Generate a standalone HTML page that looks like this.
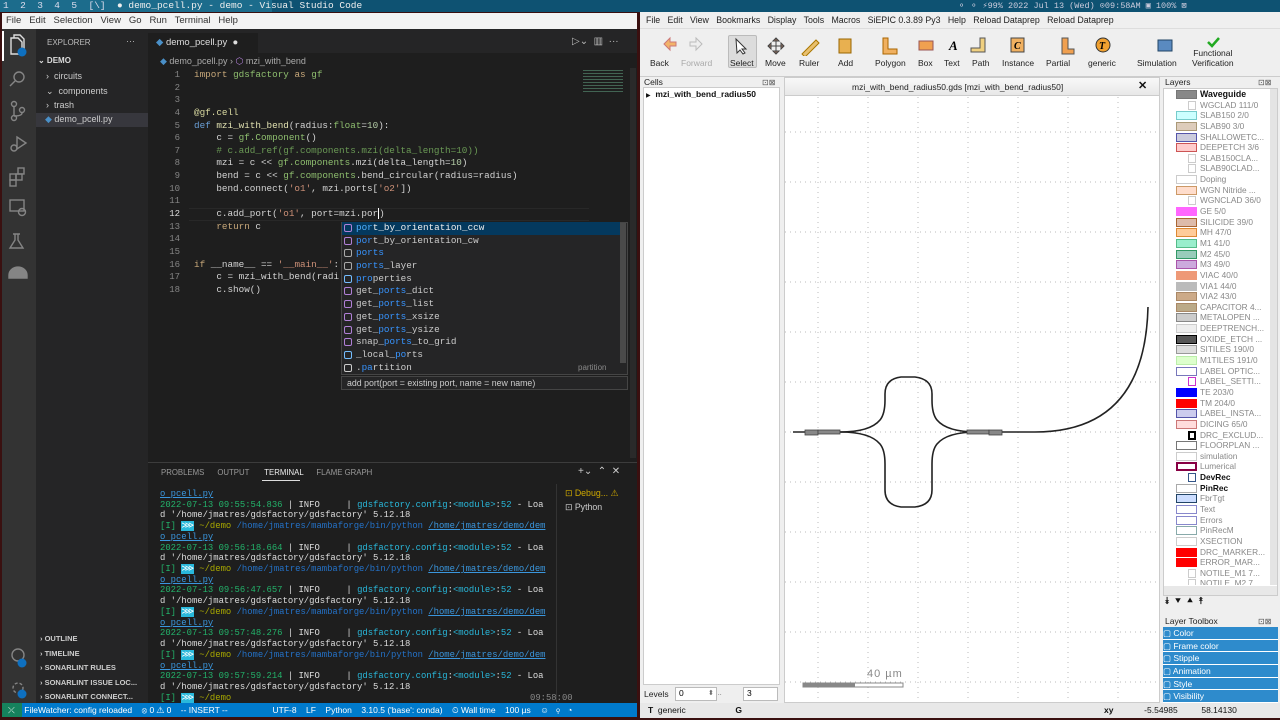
<!DOCTYPE html><html><head><meta charset="utf-8"><style>
*{margin:0;padding:0;box-sizing:border-box}
body{width:1280px;height:720px;overflow:hidden;background:#3a1010;font-family:"Liberation Sans",sans-serif;position:relative}
.a{position:absolute;white-space:pre}
.m{font-family:"Liberation Mono",monospace}
.code,.t,.ac,.lay,.tbx{white-space:normal}
.code div,.t div,.ac div,.lay div{white-space:pre}
.code div{height:12.65px;line-height:12.65px}
.t div{height:10.72px;line-height:10.72px}
.ac div{height:12.7px;line-height:12.7px;padding-left:15px;position:relative}
.ac div i{position:absolute;left:3px;top:2px;width:8px;height:8px;border:1px solid #b180d7;border-radius:2px}
.lay div{height:10.65px;line-height:10.65px;position:relative;padding-left:36px;font-size:8.3px;color:#888}
.lay div b{position:absolute;left:12px;top:1px;width:21px;height:9px;border:1px solid #777}
.tb div{position:absolute;top:58px;font-size:8.5px;color:#222;text-align:center}
.tbx div{height:12.7px;line-height:12.7px;background:#2e8bcc;border-bottom:1px solid #fff}
</style></head><body>
<div class="a" style="left:0;top:0;width:1280px;height:12px;background:#0e5272"></div>
<div class="a m" style="left:0;top:0;width:272px;height:12px;background:#1c6c8c"></div>
<div class="a m" style="left:3px;top:0;font-size:9.5px;color:#dde;line-height:12px">1  2  3  4  5  [\]  <span style="color:#eee">● demo_pcell.py - demo - Visual Studio Code</span></div>
<div class="a m" style="left:958px;top:0;font-size:8.5px;color:#ccd;line-height:12px">⚬ ⚬ ⚡99% 2022 Jul 13 (Wed) ⊙09:58AM ▣ 100% ⊠</div>

<div class="a" style="left:2px;top:13px;width:635px;height:16px;background:#f3f3f3"></div>
<div class="a" style="left:6px;top:13px;font-size:9.5px;color:#333;line-height:16px">File   Edit   Selection   View   Go   Run   Terminal   Help</div>
<div class="a" style="left:2px;top:29px;width:34px;height:674px;background:#333333"></div>
<div class="a" style="left:2px;top:31px;width:2px;height:30px;background:#fff"></div>
<svg class="a" style="left:2px;top:30px" width="34" height="670" fill="none" stroke="#858585" stroke-width="1.4">
<path d="M9 8h7l4 4v12H9z M12 8V5h6l4 4v12" stroke="#ddd"/><circle cx="20" cy="22" r="4.5" fill="#0e70c0" stroke="none"/>
<circle cx="17" cy="47" r="5"/><path d="M13 51l-5 5"/>
<circle cx="12" cy="74" r="2.5"/><circle cx="12" cy="88" r="2.5"/><circle cx="20" cy="80" r="2.5"/><path d="M12 77v8M20 83q0 3-8 3"/>
<path d="M15 107l9 6-9 6z"/><circle cx="12" cy="118" r="3"/>
<rect x="8" y="144" width="6" height="6"/><rect x="14" y="144" width="6" height="6"/><rect x="8" y="150" width="6" height="6"/><rect x="16" y="138" width="6" height="6"/>
<rect x="8" y="170" width="14" height="11"/><circle cx="20" cy="182" r="3.5"/>
<path d="M11 204h7M13 204v6l-5 8h13l-5-8v-6"/>
<path d="M7 245a8 7 0 0 1 18 0v3H7z" fill="#858585"/>
<circle cx="16" cy="625" r="6"/><circle cx="16" cy="658" r="5" stroke-dasharray="3 2"/>
<circle cx="20" cy="633" r="4.5" fill="#0e70c0" stroke="none"/><circle cx="20" cy="664" r="4.5" fill="#0e70c0" stroke="none"/>
</svg>
<div class="a" style="left:36px;top:29px;width:112px;height:674px;background:#252526"></div>
<div class="a" style="left:47px;top:38px;font-size:8px;color:#bbb">EXPLORER</div>
<div class="a" style="left:126px;top:36px;font-size:9px;color:#bbb">···</div>
<div class="a" style="left:38px;top:56px;font-size:8px;color:#ddd;font-weight:bold">⌄ DEMO</div>
<div class="a" style="left:46px;top:69px;font-size:9px;color:#ccc;line-height:14.7px">›  circuits
⌄  components
›  trash</div>
<div class="a" style="left:36px;top:113px;width:112px;height:14px;background:#37373d"></div>
<div class="a" style="left:45px;top:114px;font-size:9px;color:#ccc"><span style="color:#4a90c8">◆</span> demo_pcell.py</div>
<div class="a" style="left:36px;top:630px;width:112px;height:73px;background:#252526"></div>
<div class="a" style="left:40px;top:632px;font-size:7.5px;color:#ccc;font-weight:bold;line-height:14.6px">› OUTLINE
› TIMELINE
› SONARLINT RULES
› SONARLINT ISSUE LOC...
› SONARLINT CONNECT...</div>

<div class="a" style="left:148px;top:29px;width:489px;height:433px;background:#1e1e1e"></div>
<div class="a" style="left:148px;top:29px;width:489px;height:24px;background:#252526"></div>
<div class="a" style="left:148px;top:33px;width:110px;height:20px;background:#1e1e1e"></div>
<div class="a" style="left:156px;top:37px;font-size:9.5px;color:#ddd"><span style="color:#4a90c8">◆</span> demo_pcell.py  ●</div>
<div class="a" style="left:572px;top:36px;font-size:10px;color:#bbb">▷⌄  ▥  ···</div>
<div class="a" style="left:160px;top:56px;font-size:9px;color:#aaa"><span style="color:#4a90c8">◆</span> demo_pcell.py › <span style="color:#b180d7">⬡</span> mzi_with_bend</div>
<div class="a m code" style="left:150px;top:69px;width:30px;text-align:right;font-size:9px;color:#858585"><div>1</div><div>2</div><div>3</div><div>4</div><div>5</div><div>6</div><div>7</div><div>8</div><div>9</div><div>10</div><div>11</div><div style="color:#ddd">12</div><div>13</div><div>14</div><div>15</div><div>16</div><div>17</div><div>18</div></div>
<div class="a" style="left:189px;top:208px;width:400px;height:13px;border-top:1px solid #282828;border-bottom:1px solid #282828"></div>
<div class="a m code" style="left:194px;top:69px;font-size:9.3px;color:#d4d4d4"><div><span style="color:#c8a87a">import</span> <span style="color:#8fbf6f">gdsfactory</span> <span style="color:#c8a87a">as</span> <span style="color:#8fbf6f">gf</span></div><div></div><div></div><div><span style="color:#d8d8a0">@gf.cell</span></div><div><span style="color:#6a9fd6">def</span> <span style="color:#e0e0b0">mzi_with_bend</span>(radius:<span style="color:#8fbf6f">float</span>=<span style="color:#b5cea8">10</span>):</div><div>    c = <span style="color:#8fbf6f">gf.Component</span>()</div><div style="color:#6a9955">    # c.add_ref(gf.components.mzi(delta_length=10))</div><div>    mzi = c &lt;&lt; <span style="color:#8fbf6f">gf.components</span>.mzi(delta_length=<span style="color:#b5cea8">10</span>)</div><div>    bend = c &lt;&lt; <span style="color:#8fbf6f">gf.components</span>.bend_circular(radius=radius)</div><div>    bend.connect(<span style="color:#ce9178">'o1'</span>, mzi.ports[<span style="color:#ce9178">'o2'</span>])</div><div></div><div>    c.add_port(<span style="color:#ce9178">'o1'</span>, port=mzi.por<span style="border-left:1px solid #fff">)</span></div><div>    <span style="color:#c8a87a">return</span> c</div><div></div><div></div><div><span style="color:#c8a87a">if</span> __name__ == <span style="color:#ce9178">'__main__'</span>:</div><div>    c = mzi_with_bend(radi</div><div>    c.show()</div></div>
<div class="a" style="left:583px;top:70px;width:40px;height:24px;opacity:.5;background:repeating-linear-gradient(#6a8 0 1px,transparent 1px 3px)"></div>
<div class="a" style="left:630px;top:68px;width:6px;height:390px;background:#2a2a2a"></div>
<div class="a" style="left:341px;top:222px;width:287px;height:153px;background:#252526;border:1px solid #454545"></div>
<div class="a" style="left:342px;top:222px;width:278px;height:12.7px;background:#04395e"></div>
<div class="a" style="left:620px;top:223px;width:6px;height:140px;background:#4a4a4a"></div>
<div class="a m ac" style="left:341px;top:222px;font-size:9.3px;color:#ccc"><div><i></i><span style="color:#4fb0ff">por</span><span style="color:#eee">t_by_orientation_ccw</span></div><div><i></i><span style="color:#3794ff">por</span>t_by_orientation_cw</div><div><i style="border-color:#aaa"></i><span style="color:#3794ff">ports</span></div><div><i style="border-color:#aaa"></i><span style="color:#3794ff">ports</span>_layer</div><div><i style="border-color:#75beff"></i><span style="color:#3794ff">pro</span>perties</div><div><i></i>get_<span style="color:#3794ff">ports</span>_dict</div><div><i></i>get_<span style="color:#3794ff">ports</span>_list</div><div><i></i>get_<span style="color:#3794ff">ports</span>_xsize</div><div><i></i>get_<span style="color:#3794ff">ports</span>_ysize</div><div><i></i>snap_<span style="color:#3794ff">ports</span>_to_grid</div><div><i style="border-color:#75beff"></i>_local_<span style="color:#3794ff">po</span>rts</div><div><i style="border-color:#ccc"></i>.<span style="color:#3794ff">pa</span>rtition<span style="position:absolute;left:237px;color:#888;font-size:8px;font-family:'Liberation Sans'">partition</span></div></div>
<div class="a" style="left:341px;top:376px;width:287px;height:14px;background:#252526;border:1px solid #454545"></div>
<div class="a" style="left:347px;top:378px;font-size:8.8px;color:#ccc">add port(port = existing port, name = new name)</div>

<div class="a" style="left:148px;top:462px;width:489px;height:241px;background:#1e1e1e;border-top:1px solid #3c3c3c"></div>
<div class="a" style="left:161px;top:468px;font-size:7.8px;color:#999">PROBLEMS      OUTPUT       <span style="color:#eee">TERMINAL</span>      FLAME GRAPH</div>
<div class="a" style="left:262px;top:480px;width:38px;height:1px;background:#ddd"></div>
<div class="a" style="left:578px;top:466px;font-size:10px;color:#ccc">+⌄  ⌃  ✕</div>
<div class="a" style="left:556px;top:484px;width:1px;height:218px;background:#333"></div>
<div class="a" style="left:565px;top:486px;font-size:8.8px;color:#ccc;line-height:14px"><span style="color:#cca700">⊡ Debug... ⚠</span>
⊡ Python</div>
<div class="a m t" style="left:160px;top:489px;font-size:8.9px;color:#ddd"><div style="color:#3a96dd;text-decoration:underline">o pcell.py</div><div><span style="color:#23b26a">2022-07-13 09:55:54.836</span> | INFO     | <span style="color:#29b8db">gdsfactory.config</span>:<span style="color:#29b8db">&lt;module&gt;</span>:<span style="color:#29b8db">52</span> - Loa</div><div>d '/home/jmatres/gdsfactory/gdsfactory' 5.12.18</div><div><span style="color:#23b26a">[I]</span> <span style="background:#29b8db;color:#fff">⋙</span> <span style="color:#a8a800">~/demo</span> <span style="color:#2472c8">/home/jmatres/mambaforge/bin/python</span> <span style="color:#3a96dd;text-decoration:underline">/home/jmatres/demo/dem</span></div><div style="color:#3a96dd;text-decoration:underline">o pcell.py</div><div><span style="color:#23b26a">2022-07-13 09:56:18.664</span> | INFO     | <span style="color:#29b8db">gdsfactory.config</span>:<span style="color:#29b8db">&lt;module&gt;</span>:<span style="color:#29b8db">52</span> - Loa</div><div>d '/home/jmatres/gdsfactory/gdsfactory' 5.12.18</div><div><span style="color:#23b26a">[I]</span> <span style="background:#29b8db;color:#fff">⋙</span> <span style="color:#a8a800">~/demo</span> <span style="color:#2472c8">/home/jmatres/mambaforge/bin/python</span> <span style="color:#3a96dd;text-decoration:underline">/home/jmatres/demo/dem</span></div><div style="color:#3a96dd;text-decoration:underline">o pcell.py</div><div><span style="color:#23b26a">2022-07-13 09:56:47.657</span> | INFO     | <span style="color:#29b8db">gdsfactory.config</span>:<span style="color:#29b8db">&lt;module&gt;</span>:<span style="color:#29b8db">52</span> - Loa</div><div>d '/home/jmatres/gdsfactory/gdsfactory' 5.12.18</div><div><span style="color:#23b26a">[I]</span> <span style="background:#29b8db;color:#fff">⋙</span> <span style="color:#a8a800">~/demo</span> <span style="color:#2472c8">/home/jmatres/mambaforge/bin/python</span> <span style="color:#3a96dd;text-decoration:underline">/home/jmatres/demo/dem</span></div><div style="color:#3a96dd;text-decoration:underline">o pcell.py</div><div><span style="color:#23b26a">2022-07-13 09:57:48.276</span> | INFO     | <span style="color:#29b8db">gdsfactory.config</span>:<span style="color:#29b8db">&lt;module&gt;</span>:<span style="color:#29b8db">52</span> - Loa</div><div>d '/home/jmatres/gdsfactory/gdsfactory' 5.12.18</div><div><span style="color:#23b26a">[I]</span> <span style="background:#29b8db;color:#fff">⋙</span> <span style="color:#a8a800">~/demo</span> <span style="color:#2472c8">/home/jmatres/mambaforge/bin/python</span> <span style="color:#3a96dd;text-decoration:underline">/home/jmatres/demo/dem</span></div><div style="color:#3a96dd;text-decoration:underline">o pcell.py</div><div><span style="color:#23b26a">2022-07-13 09:57:59.214</span> | INFO     | <span style="color:#29b8db">gdsfactory.config</span>:<span style="color:#29b8db">&lt;module&gt;</span>:<span style="color:#29b8db">52</span> - Loa</div><div>d '/home/jmatres/gdsfactory/gdsfactory' 5.12.18</div><div><span style="color:#23b26a">[I]</span> <span style="background:#29b8db;color:#fff">⋙</span> <span style="color:#a8a800">~/demo</span><span style="position:absolute;left:370px;color:#888">09:58:00</span></div></div>

<div class="a" style="left:2px;top:703px;width:635px;height:14px;background:#007acc"></div>
<div class="a" style="left:2px;top:703px;width:20px;height:14px;background:#16825d"></div>
<div class="a" style="left:8px;top:704px;font-size:8.5px;color:#fff;line-height:12px">⤫    FileWatcher: config reloaded    ⊗ 0 ⚠ 0    -- INSERT --                   UTF-8    LF    Python    3.10.5 ('base': conda)    ⏲ Wall time    100 µs    ☺   ⚲   ◔</div>

<div class="a" style="left:640px;top:12px;width:640px;height:706px;background:#efefef"></div>
<div class="a" style="left:646px;top:15px;font-size:8.8px;color:#222">File   Edit   View   Bookmarks   Display   Tools   Macros   SiEPIC 0.3.89 Py3   Help   Reload Dataprep   Reload Dataprep</div>
<div class="a" style="left:640px;top:28px;width:640px;height:1px;background:#ddd"></div>
<div class="a" style="left:728px;top:35px;width:29px;height:33px;background:#dcdcdc;border:1px solid #bbb;border-radius:2px"></div>
<svg class="a" style="left:640px;top:34px" width="640" height="22">
<path d="M24 10l6-6v4h6v4h-6v4z" fill="#f2b36a" stroke="#c77"/>
<path d="M62 10l-6-6v4h-6v4h6v4z" fill="#eee" stroke="#bbb"/>
<path d="M96 5l10 10-4 0 3 4-2 1-3-4-3 3z" fill="#fff" stroke="#333"/>
<path d="M136 4v16M128 12h16M136 4l-3 3h6zM136 20l-3-3h6zM128 12l3-3v6zM144 12l-3-3v6z" stroke="#444" fill="#d97"/>
<path d="M162 20l14-14 3 3-14 14z" fill="#e8c070" stroke="#a70"/>
<rect x="199" y="5" width="12" height="14" fill="#e8b050" stroke="#960"/>
<path d="M243 4v16h14v-5h-9V4z" fill="#f0b060" stroke="#a60"/>
<rect x="279" y="7" width="14" height="9" fill="#f0a050" stroke="#955"/>
<text x="309" y="16" font-size="13" font-style="italic" font-family="Liberation Serif" font-weight="bold">A</text>
<path d="M331 18h14V4h-5v10h-9z" fill="#f0d080" stroke="#555"/>
<rect x="371" y="4" width="13" height="14" fill="#f0b060" stroke="#444"/><text x="374" y="15" font-size="10" font-family="Liberation Serif" font-weight="bold" font-style="italic">C</text>
<path d="M422 4v16h12v-5h-6V4z" fill="#f0a050" stroke="#555"/>
<circle cx="463" cy="11" r="7" fill="#f0a030" stroke="#333"/><text x="459" y="15" font-size="10" font-family="Liberation Serif" font-weight="bold" font-style="italic">T</text>
<rect x="518" y="6" width="14" height="11" fill="#5a8ac0" stroke="#246"/>
<path d="M568 8l4 4 7-8" stroke="#2a2" stroke-width="2.5" fill="none"/>
</svg>
<div class="tb"><div style="left:650px">Back</div><div style="left:681px;color:#aaa">Forward</div><div style="left:730px">Select</div><div style="left:765px">Move</div><div style="left:799px">Ruler</div><div style="left:838px">Add</div><div style="left:875px">Polygon</div><div style="left:918px">Box</div><div style="left:944px">Text</div><div style="left:972px">Path</div><div style="left:1002px">Instance</div><div style="left:1046px">Partial</div><div style="left:1088px">generic</div><div style="left:1137px">Simulation</div><div style="left:1192px;top:48px;line-height:10px">Functional<br>Verification</div></div>
<div class="a" style="left:640px;top:76px;width:640px;height:1px;background:#ccc"></div>
<div class="a" style="left:644px;top:77px;font-size:8.5px;color:#222">Cells</div>
<div class="a" style="left:762px;top:78px;font-size:8px;color:#555">⊡⊠</div>
<div class="a" style="left:643px;top:87px;width:137px;height:598px;background:#fff;border:1px solid #ccc"></div>
<div class="a" style="left:646px;top:89px;font-size:8.5px;color:#111"><span style="font-size:6px">▶</span>  <b>mzi_with_bend_radius50</b></div>
<div class="a" style="left:644px;top:689px;font-size:8.5px;color:#222">Levels</div>
<div class="a" style="left:675px;top:687px;width:42px;height:14px;background:#fff;border:1px solid #bbb;font-size:8.5px;padding-left:3px">0</div>
<div class="a" style="left:708px;top:689px;font-size:7px;color:#666">⬍  ..</div>
<div class="a" style="left:743px;top:687px;width:35px;height:14px;background:#fff;border:1px solid #bbb;font-size:8.5px;padding-left:3px">3</div>

<div class="a" style="left:784px;top:77px;width:376px;height:626px;background:#fff;border:1px solid #ccc"></div>
<div class="a" style="left:785px;top:78px;width:374px;height:18px;background:linear-gradient(#f8f8f8,#e8e8e8);border-bottom:1px solid #ccc"></div>
<div class="a" style="left:852px;top:82px;font-size:8.5px;color:#222">mzi_with_bend_radius50.gds [mzi_with_bend_radius50]</div>
<div class="a" style="left:1138px;top:79px;font-size:11px;color:#111;font-weight:bold">✕</div>
<svg class="a" style="left:785px;top:97px" width="374" height="605">
<g stroke="#bbb" stroke-width="1" stroke-dasharray="1 4">
<path d="M33 0v605M83 0v605M133 0v605M183 0v605M233 0v605M283 0v605M333 0v605"/>
<path d="M0 35h374M0 85h374M0 135h374M0 185h374M0 235h374M0 285h374M0 335h374M0 385h374M0 435h374M0 485h374M0 535h374M0 585h374"/>
</g>
<g fill="none" stroke="#222" stroke-width="1.6">
<path d="M8 335h40M55 335q30 0 40-12q5-6 5-20v-6q0-15 16-17h14q17 2 17 17v6q0 14 5 20q10 12 40 12"/>
<path d="M55 335q30 0 40 12q5 6 5 20v26q0 15 16 17h14q17-2 17-17v-26q0-14 5-20q10-12 40-12"/>
<path d="M190 335h60q110 0 113-125"/>
</g>
<g fill="#888" stroke="#444" stroke-width=".8">
<rect x="20" y="333" width="13" height="5"/><rect x="33" y="333" width="22" height="4"/><rect x="182" y="333" width="22" height="4"/><rect x="204" y="333" width="13" height="5"/></g>
<text x="82" y="580" font-size="11" fill="#888" font-family="Liberation Sans" letter-spacing="1">40 µm</text>
<rect x="18" y="586" width="100" height="4" fill="#fff" stroke="#888"/><rect x="18" y="586" width="52" height="4" fill="#888"/>
</svg>

<div class="a" style="left:1165px;top:77px;font-size:8.5px;color:#222">Layers</div>
<div class="a" style="left:1258px;top:78px;font-size:8px;color:#555">⊡⊠</div>
<div class="a" style="left:1163px;top:88px;width:115px;height:508px;background:#fff;border:1px solid #ccc;overflow:hidden"></div>
<div class="a lay" style="left:1164px;top:89px;width:106px;height:496px;overflow:hidden"><div style="color:#111;font-weight:bold;font-size:8.8px"><b style="background:#888"></b>Waveguide</div><div><b style="width:8px;left:24px;border-color:#ccc"></b>WGCLAD 111/0</div><div><b style="background:#cff;border-color:#7cc"></b>SLAB150 2/0</div><div><b style="background:#dcb;border-color:#a97"></b>SLAB90 3/0</div><div><b style="background:#ccd;border-color:#55a"></b>SHALLOWETC...</div><div><b style="background:#fcc;border-color:#c55"></b>DEEPETCH 3/6</div><div><b style="width:8px;left:24px;border-color:#ccc"></b>SLAB150CLA...</div><div><b style="width:8px;left:24px;border-color:#ccc"></b>SLAB90CLAD...</div><div><b style="border-color:#ccc"></b>Doping</div><div><b style="background:#fdc;border-color:#c96"></b>WGN Nitride ...</div><div><b style="width:8px;left:24px;border-color:#ccc"></b>WGNCLAD 36/0</div><div><b style="background:#f6f;border-color:#f6f"></b>GE 5/0</div><div><b style="background:#dba;border-color:#a63"></b>SILICIDE 39/0</div><div><b style="background:#fc9;border-color:#d83"></b>MH 47/0</div><div><b style="background:#9ec;border-color:#5b8"></b>M1 41/0</div><div><b style="background:#9cb;border-color:#396"></b>M2 45/0</div><div><b style="background:#cad;border-color:#a5a"></b>M3 49/0</div><div><b style="background:#e97;border-color:#e97"></b>VIAC 40/0</div><div><b style="background:#bbb;border-color:#bbb"></b>VIA1 44/0</div><div><b style="background:#ca8;border-color:#a86"></b>VIA2 43/0</div><div><b style="background:#ba8;border-color:#a86"></b>CAPACITOR 4...</div><div><b style="background:#ccc;border-color:#888"></b>METALOPEN ...</div><div><b style="background:#eee;border-color:#ccc"></b>DEEPTRENCH...</div><div><b style="background:#555;border-color:#000"></b>OXIDE_ETCH ...</div><div><b style="background:#ddd;border-color:#999"></b>SITILES 190/0</div><div><b style="background:#dfc;border-color:#bea"></b>M1TILES 191/0</div><div><b style="border-color:#77b"></b>LABEL OPTIC...</div><div><b style="width:8px;left:24px;border-color:#c3c"></b>LABEL_SETTI...</div><div><b style="background:#00f;border-color:#00f"></b>TE 203/0</div><div><b style="background:#f00;border-color:#f00"></b>TM 204/0</div><div><b style="background:#cce;border-color:#55a"></b>LABEL_INSTA...</div><div><b style="background:#fdd;border-color:#c77"></b>DICING 65/0</div><div><b style="width:8px;left:24px;border:2px solid #000"></b>DRC_EXCLUD...</div><div><b></b>FLOORPLAN ...</div><div><b style="border-color:#ccc"></b>simulation</div><div><b style="border:2px solid #804"></b>Lumerical</div><div style="color:#111;font-weight:bold"><b style="width:8px;left:24px;border-color:#358"></b>DevRec</div><div style="color:#111;font-weight:bold"><b style="border-color:#aaa"></b>PinRec</div><div><b style="background:#cdf;border-color:#246"></b>FbrTgt</div><div><b style="border-color:#88c"></b>Text</div><div><b style="border-color:#88c"></b>Errors</div><div><b style="border-color:#8aa"></b>PinRecM</div><div><b style="border-color:#ccc"></b>XSECTION</div><div><b style="background:#f00;border-color:#f00"></b>DRC_MARKER...</div><div><b style="background:#f00;border-color:#f00"></b>ERROR_MAR...</div><div><b style="width:8px;left:24px;border-color:#ccc"></b>NOTILE_M1 7...</div><div><b style="width:8px;left:24px;border-color:#ccc"></b>NOTILE_M2 7...</div></div>
<div class="a" style="left:1270px;top:89px;width:7px;height:496px;background:#e4e4e4"></div>
<div class="a" style="left:1164px;top:586px;width:113px;height:9px;background:#e8e8e8"></div>
<div class="a" style="left:1164px;top:596px;font-size:10px;color:#111;letter-spacing:4px">⯯⯆⯅⯭</div>
<div class="a" style="left:1165px;top:616px;font-size:8.5px;color:#222">Layer Toolbox</div>
<div class="a" style="left:1258px;top:617px;font-size:8px;color:#555">⊡⊠</div>
<div class="a tbx" style="left:1163px;top:627px;width:115px;font-size:8.5px;color:#fff"><div>▢ Color</div><div>▢ Frame color</div><div>▢ Stipple</div><div>▢ Animation</div><div>▢ Style</div><div>▢ Visibility</div></div>
<div class="a" style="left:640px;top:703px;width:640px;height:15px;background:#e8e8e8"></div>
<div class="a" style="left:648px;top:705px;font-size:8.5px;color:#111"><b>T</b>  generic                     <b>G</b></div>
<div class="a" style="left:1104px;top:705px;font-size:8.5px;color:#111"><b>xy</b>             -5.54985          58.14130</div>
</body></html>
